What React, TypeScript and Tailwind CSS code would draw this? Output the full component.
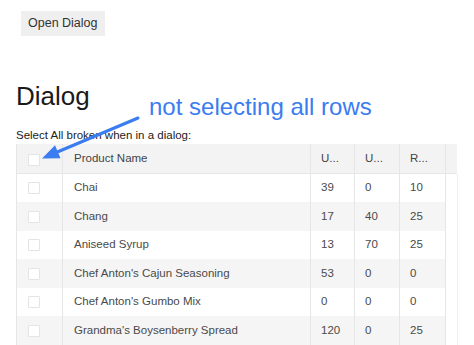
const rows = [
  { name: "Chai", a: "39", b: "0", c: "10" },
  { name: "Chang", a: "17", b: "40", c: "25" },
  { name: "Aniseed Syrup", a: "13", b: "70", c: "25" },
  { name: "Chef Anton's Cajun Seasoning", a: "53", b: "0", c: "0" },
  { name: "Chef Anton's Gumbo Mix", a: "0", b: "0", c: "0" },
  { name: "Grandma's Boysenberry Spread", a: "120", b: "0", c: "25" },
];

const grid = "grid grid-cols-[46px_248px_44px_45px_46px_12px]";

function Box() {
  return <div className="w-[12px] h-[12px] bg-white border border-[#e4e4e4] rounded-[1px]" />;
}

export default function App() {
  return (
    <div className="relative w-[474px] h-[345px] overflow-hidden bg-white font-['Liberation_Sans',Arial,sans-serif] text-[#222]">
      <div className="pt-[10px] pl-[21px]">
        <button className="h-[25px] px-[7px] bg-[#efefef] text-[12.5px] text-[#333] leading-none">
          Open Dialog
        </button>
      </div>

      <h1 className="mt-[47px] ml-[16px] text-[26px] leading-none text-[#1a1a1a]">Dialog</h1>

      <p className="mt-[21px] ml-[16px] text-[11.5px] leading-none text-[#222]">
        Select All broken when in a dialog:
      </p>

      <div className="mt-[3px] ml-[16px] w-[441px] border-l border-[#e6e6e6] text-[11.5px]">
        <div className={`${grid} h-[29.5px] bg-[#f3f3f3] border-b border-[#e6e6e6] text-[#444]`}>
          <div className="flex items-center pl-[11px] border-r border-[#e6e6e6] pt-[2px]">
            <Box />
          </div>
          <div className="flex items-center pl-[11px] border-r border-[#e6e6e6]">Product Name</div>
          <div className="flex items-center pl-[10px] border-r border-[#e6e6e6]">U...</div>
          <div className="flex items-center pl-[10px] border-r border-[#e6e6e6]">U...</div>
          <div className="flex items-center pl-[10px] border-r border-[#e6e6e6]">R...</div>
          <div />
        </div>
        {rows.map((r, i) => (
          <div key={r.name} className={`${grid} h-[28.5px] text-[#4a4a4a]`}>
            <div className={`flex items-center pl-[11px] border-r border-[#e6e6e6] ${i % 2 ? "bg-[#f5f5f5]" : "bg-white"}`}>
              <Box />
            </div>
            <div className={`flex items-center pl-[11px] border-r border-[#e6e6e6] ${i % 2 ? "bg-[#f5f5f5]" : "bg-white"}`}>{r.name}</div>
            <div className={`flex items-center pl-[10px] border-r border-[#e6e6e6] ${i % 2 ? "bg-[#f5f5f5]" : "bg-white"}`}>{r.a}</div>
            <div className={`flex items-center pl-[10px] border-r border-[#e6e6e6] ${i % 2 ? "bg-[#f5f5f5]" : "bg-white"}`}>{r.b}</div>
            <div className={`flex items-center pl-[10px] border-r border-[#e6e6e6] ${i % 2 ? "bg-[#f5f5f5]" : "bg-white"}`}>{r.c}</div>
            <div className="bg-white border-r border-[#efefef]" />
          </div>
        ))}
      </div>

      <div className="absolute left-[149px] top-[95px] text-[24px] leading-none text-[#3b7cf0]">
        not selecting all rows
      </div>

      <svg className="absolute left-0 top-0" width="474" height="345" viewBox="0 0 474 345">
        <line x1="138" y1="118" x2="55" y2="153" stroke="#3b7cf0" strokeWidth="3" strokeLinecap="round" />
        <polygon points="42,158.5 55,145.3 60.5,158.2" fill="#3b7cf0" />
      </svg>
    </div>
  );
}
